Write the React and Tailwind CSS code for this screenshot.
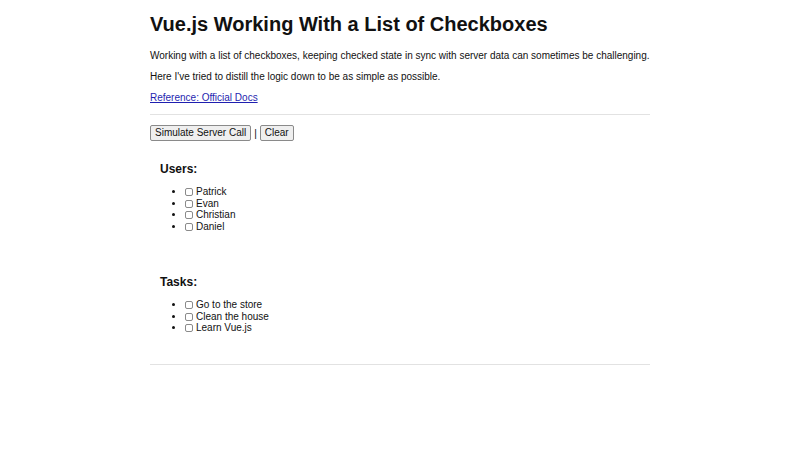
export default function App() {
  const users = ["Patrick", "Evan", "Christian", "Daniel"];
  const tasks = ["Go to the store", "Clean the house", "Learn Vue.js"];
  const Cb = () => (
    <span className="inline-block w-[8px] h-[8px] border border-[#8a8a8a] rounded-[2px] bg-white mr-[3px] align-[-1px]"></span>
  );
  return (
    <div className="w-[800px] h-[450px] bg-white text-[#111] font-['Liberation_Sans',Arial,sans-serif]">
      <div className="w-[500px] mx-auto pt-[11px]">
        <h1 className="text-[20px] font-bold leading-[26px] mb-[13px]">Vue.js Working With a List of Checkboxes</h1>
        <p className="text-[10px] leading-[12px] mb-[9px]">Working with a list of checkboxes, keeping checked state in sync with server data can sometimes be challenging.</p>
        <p className="text-[10px] leading-[12px] mb-[9px]">Here I've tried to distill the logic down to be as simple as possible.</p>
        <p className="text-[10px] leading-[12px]"><a href="#" className="text-[#1f1fb0] underline">Reference: Official Docs</a></p>
        <hr className="border-t border-[#e2e2e2] mt-[10px] mb-[10px]" />
        <div className="flex items-center gap-[3px] text-[10px]">
          <button className="px-[4px] h-[16px] leading-[14px] border border-[#8a8a8a] bg-[#efefef] rounded-[2px]">Simulate Server Call</button>
          <span>|</span>
          <button className="px-[4px] h-[16px] leading-[14px] border border-[#8a8a8a] bg-[#efefef] rounded-[2px]">Clear</button>
        </div>
        <div className="pl-[10px] pt-[21px]">
          <h3 className="text-[12px] font-bold leading-[15px] mb-[9px]">Users:</h3>
          <ul className="list-disc pl-[25px] text-[10px] leading-[11.5px]">
            {users.map((u) => (<li key={u}><Cb />{u}</li>))}
          </ul>
          <h3 className="text-[12px] font-bold leading-[15px] mt-[43px] mb-[9px]">Tasks:</h3>
          <ul className="list-disc pl-[25px] text-[10px] leading-[11.5px]">
            {tasks.map((u) => (<li key={u}><Cb />{u}</li>))}
          </ul>
        </div>
        <hr className="border-t border-[#e2e2e2] mt-[30px]" />
      </div>
    </div>
  );
}
